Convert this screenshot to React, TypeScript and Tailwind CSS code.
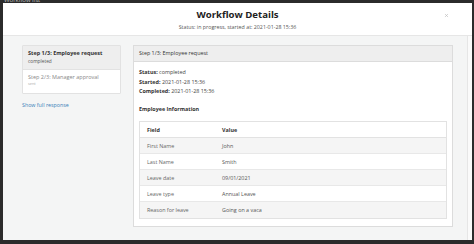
import { X } from 'lucide-react'

const rows = [
  ['First Name', 'John'],
  ['Last Name', 'Smith'],
  ['Leave date', '09/01/2021'],
  ['Leave type', 'Annual Leave'],
  ['Reason for leave', 'Going on a vaca'],
]

export default function App() {
  return (
    <div
      className="w-[474px] h-[244px] bg-[#2b2b2b] overflow-hidden relative"
      style={{ fontFamily: '"Open Sans", "Liberation Sans", sans-serif' }}
    >
      <div className="absolute left-[4px] -top-[4px] text-[6px] text-white/70">Workflow list</div>
      <div className="absolute left-[3px] top-[3px] w-[469px] h-[237px] bg-white flex flex-col">
        <div className="h-[33px] shrink-0 border-b border-[#e6e6e6] flex flex-col items-center relative">
          <div className="text-[9.6px] font-bold text-[#222] mt-[6px] leading-[12px]">Workflow Details</div>
          <div className="text-[5.3px] text-[#555] mt-[3px] leading-[7px]">
            Status: in progress, started at: 2021-01-28 15:36
          </div>
          <X className="absolute right-[23px] top-[10px] w-[5px] h-[5px] text-[#bbb]" strokeWidth={3} />
        </div>
        <div className="flex-1 bg-[#f4f5f5] flex">
          <div className="flex-1 flex pl-[19px] pt-[9px]">
            <div className="w-[99px] shrink-0">
              <div className="border border-[#e2e2e2] bg-white rounded-[1px] text-[5.5px] leading-[8px]">
                <div className="bg-[#eeeeee] h-[24px] px-[5px] pt-[3px] border-b border-[#e2e2e2]">
                  <div className="font-bold text-[#333]">Step 1/3: Employee request</div>
                  <div className="text-[#555] text-[4.8px]">completed</div>
                </div>
                <div className="h-[23px] px-[5px] pt-[3px]">
                  <div className="text-[#888]">Step 2/3: Manager approval</div>
                  <div className="text-[#aaa] text-[3.8px] leading-[6px]">sent</div>
                </div>
              </div>
              <div className="mt-[8px] text-[5.3px] text-[#3a7fb8]">Show full response</div>
            </div>
            <div className="ml-[12px] w-[320px] h-[182px] border border-[#dcdcdc] bg-white text-[5.4px] text-[#444]">
              <div className="h-[16px] bg-[#eeeeee] border-b border-[#dcdcdc] px-[5px] flex items-center text-[#333]">
                Step 1/3: Employee request
              </div>
              <div className="px-[5px] pt-[6px] leading-[9.6px]">
                <div>
                  <span className="font-bold text-[#333]">Status:</span> completed
                </div>
                <div>
                  <span className="font-bold text-[#333]">Started:</span> 2021-01-28 15:36
                </div>
                <div>
                  <span className="font-bold text-[#333]">Completed:</span> 2021-01-28 15:36
                </div>
                <div className="font-bold text-[#333] mt-[8px]">Employee Information</div>
              </div>
              <div className="mx-[5px] mt-[7px] border border-[#e2e2e2]">
                <div className="h-[16px] flex items-center border-b border-[#e2e2e2] font-bold text-[#333]">
                  <div className="w-[82px] pl-[7px]">Field</div>
                  <div>Value</div>
                </div>
                {rows.map(([f, v], i) => (
                  <div
                    key={f}
                    className={
                      'h-[16px] flex items-center border-b border-[#e8e8e8] last:border-b-0 ' +
                      (i % 2 === 0 ? 'bg-[#f5f5f5]' : 'bg-white')
                    }
                  >
                    <div className="w-[82px] pl-[7px] text-[#666]">{f}</div>
                    <div className="text-[#555]">{v}</div>
                  </div>
                ))}
              </div>
            </div>
          </div>
          <div className="w-[5px] shrink-0 bg-[#fafafa] border-l border-[#e6e6e6]" />
        </div>
      </div>
    </div>
  )
}
